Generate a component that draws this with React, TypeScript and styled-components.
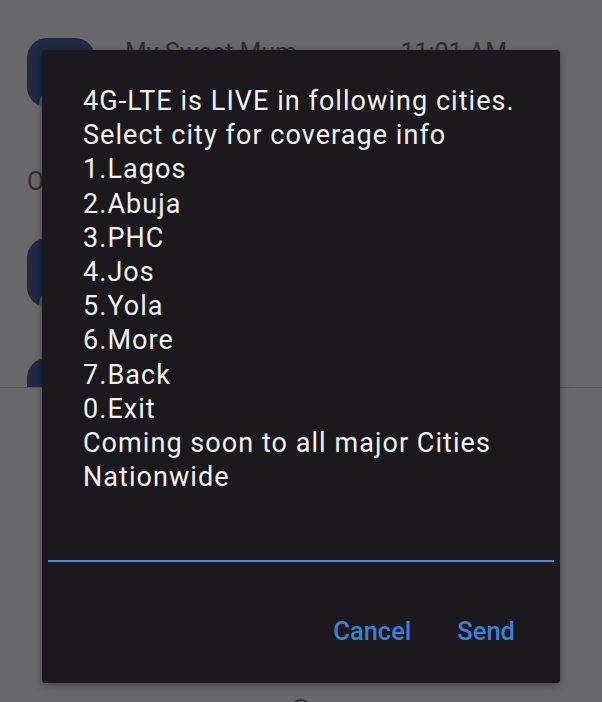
import React from "react";
import styled, { createGlobalStyle } from "styled-components";

const Global = createGlobalStyle`
  html, body { margin: 0; padding: 0; background: #69686b; }
  body { font-family: Roboto, "Noto Sans", sans-serif; }
`;

const Screen = styled.div`
  position: relative;
  width: 602px;
  height: 702px;
  overflow: hidden;
  background: #69686b;
  font-family: Roboto, "Noto Sans", sans-serif;
`;

const List = styled.div`
  height: 387px;
  overflow: hidden;
  padding: 38px 0 0 27px;
  box-sizing: border-box;
  display: flex;
  flex-direction: column;
`;

const Row = styled.div<{ $mt?: number }>`
  display: flex;
  align-items: flex-start;
  margin-top: ${(p) => p.$mt ?? 0}px;
`;

const Avatar = styled.div`
  flex: none;
  width: 68px;
  height: 69px;
  border-radius: 20px;
  background: #1f2a45;
  display: flex;
  align-items: flex-end;
  justify-content: center;
  overflow: hidden;
`;

const RowText = styled.div`
  flex: 1;
  display: flex;
  justify-content: space-between;
  padding: 1px 95px 0 30px;
  font-size: 25px;
  line-height: 28px;
  color: #2e2d31;
`;

const Header = styled.div`
  margin-top: 61px;
  font-size: 25px;
  line-height: 28px;
  color: #2e2d31;
`;

const Bottom = styled.div`
  height: 315px;
  border-top: 1px solid #35588f;
  display: flex;
  flex-direction: column;
  align-items: center;
`;

const FabRing = styled.div`
  margin-top: 311px;
  width: 16px;
  height: 16px;
  border: 2px solid #2c2b30;
  border-radius: 50%;
  flex: none;
`;

const Dialog = styled.div`
  position: absolute;
  left: 42px;
  top: 50px;
  width: 518px;
  height: 633px;
  background: #1b191e;
  border-radius: 3px;
  box-shadow: 0 3px 10px rgba(0, 0, 0, 0.35);
  display: flex;
  flex-direction: column;
  box-sizing: border-box;
`;

const Message = styled.div`
  padding: 34px 4px 0 41px;
  font-size: 27px;
  letter-spacing: 1.05px;
  line-height: 34.2px;
  color: #f2f2f2;
  white-space: pre-line;
`;

const Input = styled.div`
  margin: 66px 6px 0 6px;
  height: 2px;
  background: #4a89dc;
`;

const Actions = styled.div`
  display: flex;
  justify-content: flex-end;
  gap: 46px;
  padding: 54px 45px 0 0;
`;

const ActionButton = styled.button`
  background: none;
  border: none;
  padding: 0;
  font-family: Roboto, "Noto Sans", sans-serif;
  font-weight: 500;
  font-size: 25.5px;
  line-height: 30px;
  color: #3b7fd6;
  cursor: pointer;
`;

const lines = [
  "4G-LTE is LIVE in following cities.",
  "Select city for coverage info",
  "1.Lagos",
  "2.Abuja",
  "3.PHC",
  "4.Jos",
  "5.Yola",
  "6.More",
  "7.Back",
  "0.Exit",
  "Coming soon to all major Cities",
  "Nationwide",
];

const Person = () => (
  <svg width="48" height="52" viewBox="0 0 48 52">
    <circle cx="24" cy="16" r="11" fill="#4d5a75" />
    <path d="M2 52c0-14 10-22 22-22s22 8 22 22z" fill="#4d5a75" />
  </svg>
);

export default function App() {
  return (
    <Screen>
      <Global />
      <List>
        <Row>
          <Avatar>
            <Person />
          </Avatar>
          <RowText>
            <span>My Sweet Mum</span>
            <span>11:01 AM</span>
          </RowText>
        </Row>
        <Header>Older</Header>
        <Row $mt={42}>
          <Avatar>
            <Person />
          </Avatar>
        </Row>
        <Row $mt={51}>
          <Avatar>
            <Person />
          </Avatar>
        </Row>
      </List>
      <Bottom>
        <FabRing />
      </Bottom>
      <Dialog>
        <Message>{lines.join("\n")}</Message>
        <Input />
        <Actions>
          <ActionButton>Cancel</ActionButton>
          <ActionButton>Send</ActionButton>
        </Actions>
      </Dialog>
    </Screen>
  );
}
